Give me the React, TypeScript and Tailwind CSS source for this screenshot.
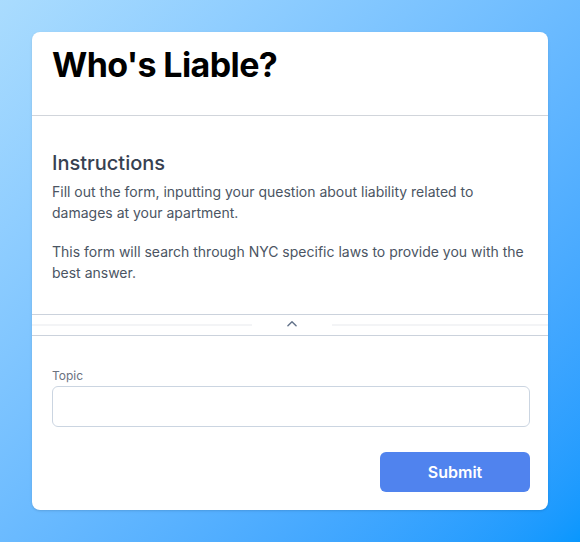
import React from "react";

export default function App() {
  return (
    <div className="min-h-[542px] w-full bg-gradient-to-br from-[#aadcfe] to-[#0797fe] p-8 font-['Inter',sans-serif]">
      <div className="flex h-[478px] flex-col overflow-hidden rounded-lg bg-white shadow-sm">
        <div className="h-[84px] border-b border-[#d1d5db] pl-5 pr-[18px] pt-[11px]">
          <h1 className="text-[34px] font-bold leading-[44px] tracking-[-0.6px] text-black">
            Who's Liable?
          </h1>
        </div>

        <div className="h-[198px] pl-5 pr-[18px] pt-[33px]">
          <h2 className="text-[20px] font-medium leading-7 text-[#374151]">
            Instructions
          </h2>
          <p className="mt-[4px] text-sm leading-[21px] text-[#4b5563]">
            Fill out the form, inputting your question about liability related to damages at your apartment.
          </p>
          <p className="mt-[18px] text-sm leading-[21px] text-[#4b5563]">
            This form will search through NYC specific laws to provide you with the best answer.
          </p>
        </div>

        <div className="flex h-[22px] items-center border-y border-[#cbd2dc]">
          <div className="h-[2px] w-[220px] bg-[#f3f4f6]" />
          <div className="flex w-[80px] justify-center pb-[2px]">
            <svg className="h-[14px] w-[14px] text-[#64748b]" viewBox="0 0 24 24" fill="none" stroke="currentColor" strokeWidth="2.5" strokeLinecap="round" strokeLinejoin="round">
              <path d="M5 15l7-7 7 7" />
            </svg>
          </div>
          <div className="h-[2px] flex-1 bg-[#f3f4f6]" />
        </div>

        <div className="pl-5 pr-[18px] pt-[32px]">
          <label className="block text-xs leading-4 text-[#6b7280]">Topic</label>
          <input
            type="text"
            className="mt-[2px] block h-[41px] w-full rounded-md border border-[#cbd5e1] px-3 text-sm outline-none"
          />
          <div className="mt-[25px] flex justify-end">
            <button className="h-10 w-[150px] rounded-md bg-[#5083ee] text-base font-semibold text-white">
              Submit
            </button>
          </div>
        </div>
      </div>
    </div>
  );
}
